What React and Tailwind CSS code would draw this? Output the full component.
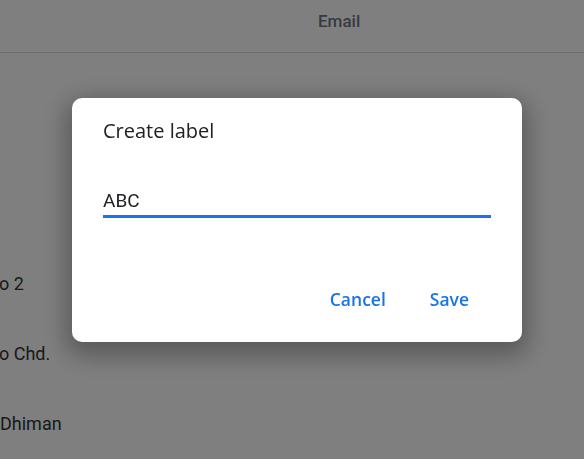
import React from "react";

const rows = [
  { text: "o 2", shift: "-ml-[1px]" },
  { text: "o Chd.", shift: "-ml-[1px]" },
  { text: "Dhiman", shift: "ml-0" },
];

const LabelDialog = () => {
  const [value, setValue] = React.useState("ABC");

  return (
    <div className="fixed inset-0 bg-black/50">
      <div className="ml-[72px] mt-[98px] w-[450px] rounded-[10px] bg-white shadow-[0_8px_24px_6px_rgba(0,0,0,0.3)] px-[31px] pt-[21px] pb-[31px]">
        <h2 className="text-[20px] leading-6 text-[#202124] font-['Open_Sans',sans-serif]">
          Create label
        </h2>

        <div className="mt-[45px] border-b-[3px] border-[#1a73e8]">
          <input
            autoFocus
            value={value}
            onChange={(e) => setValue(e.target.value)}
            className="w-full bg-transparent outline-none text-[19px] leading-[26px] pb-[1px] text-[#202124] caret-[#202124] font-['Roboto',sans-serif]"
          />
        </div>

        <div className="mt-[69px] flex justify-end items-center gap-[44px] pr-[22px]">
          <button className="text-[17.5px] leading-6 font-semibold text-[#1a73e8] font-['Open_Sans',sans-serif]">
            Cancel
          </button>
          <button className="text-[17.5px] leading-6 font-semibold text-[#1a73e8] font-['Open_Sans',sans-serif]">
            Save
          </button>
        </div>
      </div>
    </div>
  );
};

export default function App() {
  return (
    <div className="relative h-[459px] w-[584px] overflow-hidden bg-white font-['Roboto',sans-serif]">
      {/* table underneath */}
      <div className="flex h-[53px] border-b border-[#dedede]">
        <div className="w-[318px]" />
        <div className="pt-[9px] text-[17px] font-medium text-[#6f7684]">Email</div>
      </div>
      <div className="mt-[195px]">
        {rows.map((row) => (
          <div key={row.text} className="flex h-[70px] items-center">
            <span className={`${row.shift} text-[18px] text-[#333333]`}>{row.text}</span>
          </div>
        ))}
      </div>

      <LabelDialog />
    </div>
  );
}
